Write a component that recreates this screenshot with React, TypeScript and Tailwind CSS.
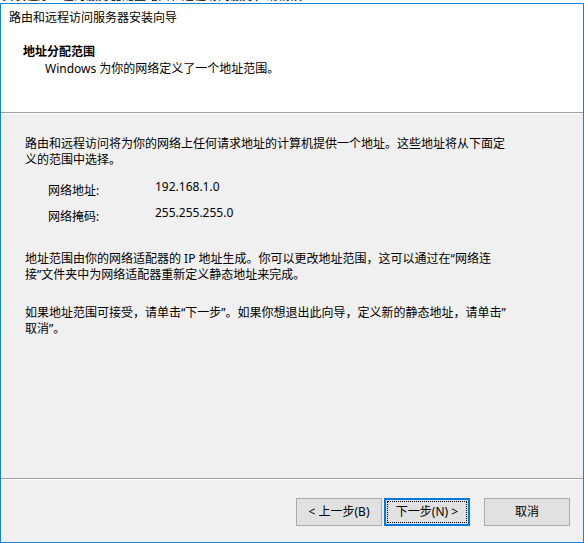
const font = { fontFamily: '"Noto Sans", "Noto Sans CJK SC", sans-serif' };

type BtnProps = { label: string; focused?: boolean };

const WizardButton = ({ label, focused = false }: BtnProps) => {
  if (focused) {
    return (
      <button className="w-[86px] h-[28px] bg-[#e1e1e1] border-2 border-[#0078d7] p-0 flex">
        <span className="flex-1 m-px border border-dotted border-black flex items-center justify-center text-[12px] leading-[16px] text-black">
          {label}
        </span>
      </button>
    );
  }
  return (
    <button className="w-[86px] h-[28px] bg-[#e1e1e1] border border-[#adadad] flex items-center justify-center text-[12px] leading-[16px] text-black">
      {label}
    </button>
  );
};

export default function App() {
  return (
    <div className="w-[584px] h-[543px] bg-white overflow-hidden text-black" style={font}>
      {/* bottom edge of the window behind */}
      <div className="h-[3px] overflow-hidden">
        <p className="-mt-[12px] pl-[2px] text-[12px] leading-[16px] whitespace-nowrap">
          安装程序正在为服务器配置路由和远程访问服务，请稍候
        </p>
      </div>

      <div className="h-[540px] border border-[#1883d7] flex flex-col">
        {/* title + wizard header */}
        <div className="h-[108px] bg-white pt-[6px]">
          <div className="pl-[8px] text-[12px] leading-[16px]">路由和远程访问服务器安装向导</div>
          <div className="mt-[18px] pl-[22px] text-[12px] leading-[16px] font-bold">地址分配范围</div>
          <div className="mt-px pl-[44px] text-[12px] leading-[16px]">
            Windows 为你的网络定义了一个地址范围。
          </div>
        </div>
        <div className="h-px bg-[#a0a0a0]" />
        <div className="h-px bg-white" />

        {/* page body */}
        <div className="h-[364px] bg-[#f0f0f0] pt-[22px] pl-[24px] text-[12px] leading-[16px] whitespace-nowrap">
          <p>
            路由和远程访问将为你的网络上任何请求地址的计算机提供一个地址。这些地址将从下面定
            <br />
            义的范围中选择。
          </p>

          <div className="mt-[11px] pl-[23px]">
            <div className="flex h-[26px]">
              <span className="w-[107px] mt-[4px]">网络地址:</span>
              <span>192.168.1.0</span>
            </div>
            <div className="flex h-[26px]">
              <span className="w-[107px] mt-[4px]">网络掩码:</span>
              <span>255.255.255.0</span>
            </div>
          </div>

          <p className="mt-[20px]">
            地址范围由你的网络适配器的 IP 地址生成。你可以更改地址范围，这可以通过在“网络连
            <br />
            接”文件夹中为网络适配器重新定义静态地址来完成。
          </p>

          <p className="mt-[22px]">
            如果地址范围可接受，请单击“下一步”。如果你想退出此向导，定义新的静态地址，请单击”
            <br />
            取消”。
          </p>
        </div>

        <div className="h-px bg-[#a0a0a0]" />
        <div className="h-px bg-white" />

        {/* navigation buttons */}
        <div className="h-[62px] bg-[#f0f0f0] pt-[18px] pr-[13px] flex justify-end items-start">
          <WizardButton label="< 上一步(B)" />
          <div className="w-[2px]" />
          <WizardButton label="下一步(N) >" focused />
          <div className="w-[14px]" />
          <WizardButton label="取消" />
        </div>
      </div>
    </div>
  );
}
